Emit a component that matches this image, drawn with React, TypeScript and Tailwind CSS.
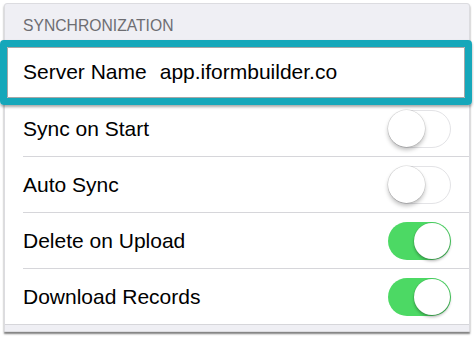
import { useState } from "react";

type Row = { label: string; on: boolean };

const ROWS: Row[] = [
  { label: "Sync on Start", on: false },
  { label: "Auto Sync", on: false },
  { label: "Delete on Upload", on: true },
  { label: "Download Records", on: true },
];

function Toggle({ on, onClick }: { on: boolean; onClick: () => void }) {
  return (
    <button
      type="button"
      onClick={onClick}
      className={
        on
          ? "relative h-[38px] w-[63px] shrink-0 rounded-full bg-[#4cd964]"
          : "relative h-[38px] w-[63px] shrink-0 rounded-full border-[1.5px] border-[#e3e3e6] bg-white"
      }
    >
      <span
        className={
          on
            ? "absolute right-[1px] top-[1px] h-[36px] w-[36px] rounded-full bg-white shadow-[0_2px_3px_rgba(0,0,0,0.3),0_0_0_0.5px_rgba(0,0,0,0.12)]"
            : "absolute left-[-1px] top-[-1px] h-[37px] w-[37px] rounded-full bg-white shadow-[0_3px_4px_rgba(0,0,0,0.25),0_0_0_0.5px_rgba(0,0,0,0.15)]"
        }
      />
    </button>
  );
}

export default function App() {
  const [rows, setRows] = useState(ROWS);

  function flip(i: number) {
    setRows((prev) => prev.map((r, j) => (j === i ? { ...r, on: !r.on } : r)));
  }

  return (
    <div className="relative h-[338px] w-[474px] overflow-hidden bg-white font-['Liberation_Sans',Arial,sans-serif]">
      <div className="ml-[4px] mt-[3px] flex h-[329px] w-[466px] flex-col overflow-hidden rounded-t-[3px] border border-[#dcdce0] bg-[#efeff4] shadow-[0_2px_2px_rgba(0,0,0,0.5)]">
        <div className="h-[40px] pl-[18px] pt-[13px] text-[15.7px] leading-[18px] text-[#6d6d72]">
          SYNCHRONIZATION
        </div>

        <div className="bg-white">
          <div className="flex h-[56px] items-center gap-[13px] pl-[18px] text-[21px] text-black">
            <span>Server Name</span>
            <span>app.iformbuilder.co</span>
          </div>
          {rows.map((row, i) => (
            <div key={row.label} className="pl-[18px]">
              <div className="flex h-[56px] items-center justify-between border-t border-[#d6d6da] pr-[18px]">
                <span className="text-[21px] text-black">{row.label}</span>
                <Toggle on={row.on} onClick={() => flip(i)} />
              </div>
            </div>
          ))}
        </div>
        <div className="flex-1 border-t border-[#d6d6da] bg-[#efeff4]" />
      </div>

      {/* highlight box around the server row */}
      <div className="pointer-events-none absolute left-0 top-[40px] h-[65px] w-[472px] rounded-[4px] border-[7px] border-[#15a7ba] shadow-[0_2px_3px_rgba(0,0,0,0.35)]">
        <div className="h-full w-full rounded-[1px] shadow-[inset_0_0_0_1px_rgba(60,60,60,0.45)]" />
      </div>
    </div>
  );
}
